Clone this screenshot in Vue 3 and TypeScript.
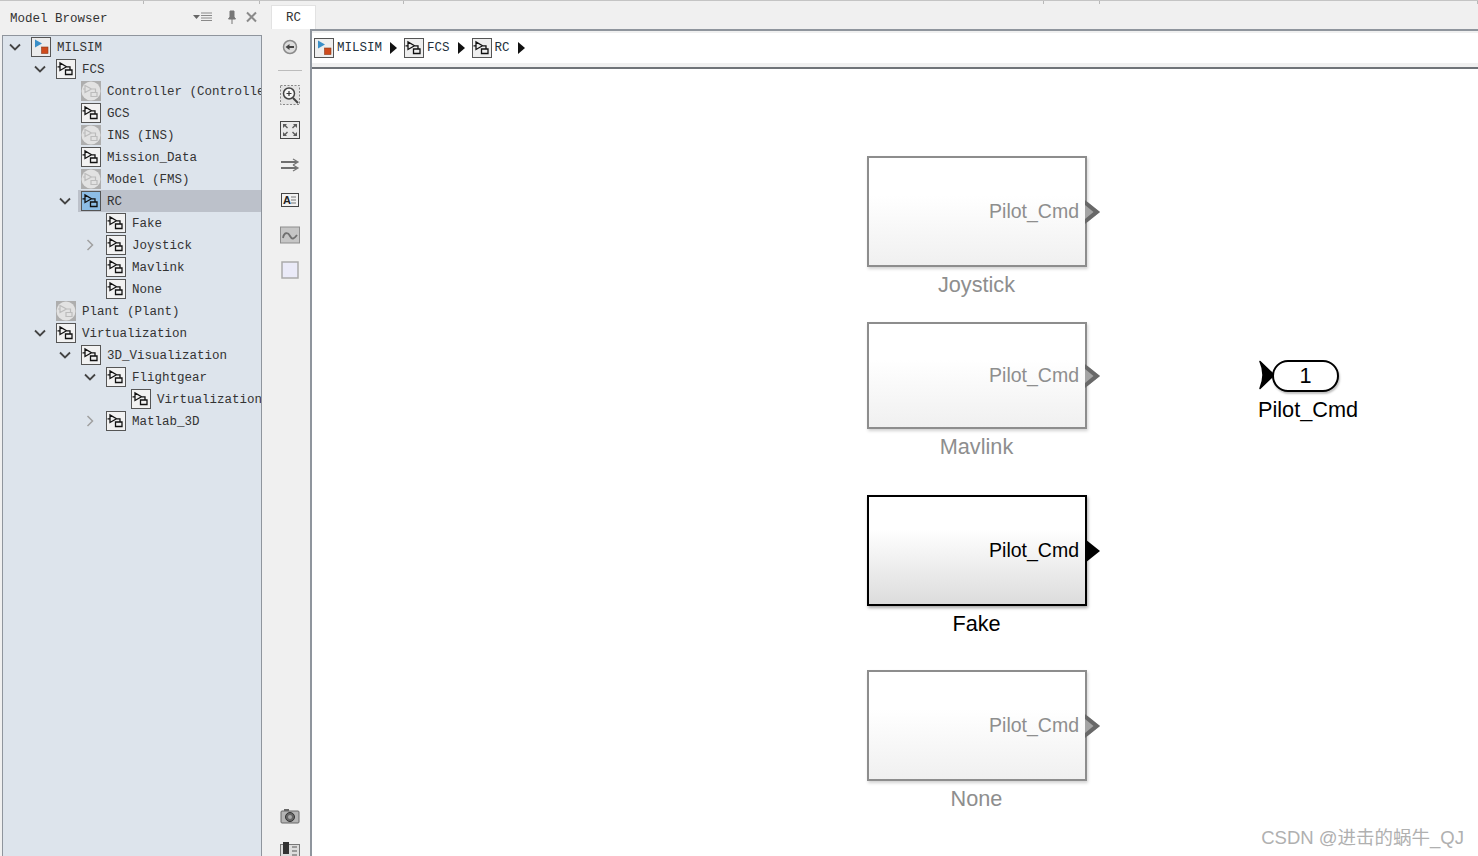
<script setup lang="ts">
type Kind = 'root' | 'sub' | 'ref'
interface Row { label: string; level: number; kind: Kind; chev?: 'down' | 'right'; selected?: boolean }
const rows: Row[] = [
  { label: 'MILSIM', level: 0, kind: 'root', chev: 'down' },
  { label: 'FCS', level: 1, kind: 'sub', chev: 'down' },
  { label: 'Controller (Controller)', level: 2, kind: 'ref' },
  { label: 'GCS', level: 2, kind: 'sub' },
  { label: 'INS (INS)', level: 2, kind: 'ref' },
  { label: 'Mission_Data', level: 2, kind: 'sub' },
  { label: 'Model (FMS)', level: 2, kind: 'ref' },
  { label: 'RC', level: 2, kind: 'sub', chev: 'down', selected: true },
  { label: 'Fake', level: 3, kind: 'sub' },
  { label: 'Joystick', level: 3, kind: 'sub', chev: 'right' },
  { label: 'Mavlink', level: 3, kind: 'sub' },
  { label: 'None', level: 3, kind: 'sub' },
  { label: 'Plant (Plant)', level: 1, kind: 'ref' },
  { label: 'Virtualization', level: 1, kind: 'sub', chev: 'down' },
  { label: '3D_Visualization', level: 2, kind: 'sub', chev: 'down' },
  { label: 'Flightgear', level: 3, kind: 'sub', chev: 'down' },
  { label: 'Virtualization', level: 4, kind: 'sub' },
  { label: 'Matlab_3D', level: 3, kind: 'sub', chev: 'right' },
]
const crumbs: { label: string; kind: Kind }[] = [
  { label: 'MILSIM', kind: 'root' },
  { label: 'FCS', kind: 'sub' },
  { label: 'RC', kind: 'sub' },
]
const blocks = [
  { name: 'Joystick', top: 87, height: 111, active: false },
  { name: 'Mavlink', top: 253, height: 107, active: false },
  { name: 'Fake', top: 426, height: 111, active: true },
  { name: 'None', top: 601, height: 111, active: false },
]
const topSegs = [144, 116, 144, 640, 56, 378]
</script>

<template>
  <div class="app">
    <div class="strip">
      <span v-for="(w, i) in topSegs" :key="i" class="seg" :style="{ width: w + 'px' }"></span>
    </div>
    <div class="main">
      <aside class="browser">
        <header class="browser-head">
          <span class="browser-title">Model Browser</span>
          <svg class="head-icons" width="68" height="14" viewBox="0 0 68 14">
            <path d="M1 5h7l-3.500 4z" fill="#666" />
            <path d="M9 3h11M9 5.500h11M9 8h11M9 10.500h11" stroke="#8a8a8a" stroke-width="1" />
            <path d="M38 1h4v6l1.500 2h-7l1.500-2zM40 9v5" fill="#777" stroke="#777" stroke-width="1" />
            <path d="M55 2.500l9 9M64 2.500l-9 9" stroke="#8a8a8a" stroke-width="2" />
          </svg>
        </header>
        <div class="tree">
          <div v-for="(r, i) in rows" :key="i" class="row" :class="'lv' + r.level">
            <span class="chev">
              <svg v-if="r.chev === 'down'" width="12" height="8" viewBox="0 0 12 8"><path d="M1 1.500l5 5 5-5" fill="none" stroke="#444" stroke-width="1.800" /></svg>
              <svg v-else-if="r.chev === 'right'" width="8" height="12" viewBox="0 0 8 12"><path d="M1.500 1l5 5-5 5" fill="none" stroke="#a0a0a0" stroke-width="1.500" /></svg>
            </span>
            <span class="cell" :class="{ selected: r.selected }">
              <svg class="ico" width="20" height="20" viewBox="0 0 20 20">
                <template v-if="r.kind === 'ref'">
                  <rect width="20" height="20" fill="#aeaeae" />
                  <circle cx="10" cy="10" r="9.500" fill="#e2e2e2" />
                  <path d="M4 4.500v7l6.500-3.500zM2 8h2M10.500 8h4v3M10 11.500h6v4h-6z" fill="none" stroke="#bcbcbc" stroke-width="1.200" />
                </template>
                <template v-else>
                  <rect x=".5" y=".5" width="19" height="19" :fill="r.selected ? '#8dbde6' : r.kind === 'root' ? '#ececec' : '#f2f2f2'" stroke="#555" />
                  <template v-if="r.kind === 'root'">
                    <path d="M4 2.500v8l7-4z" fill="#3a8fc8" />
                    <rect x="10.500" y="10" width="6.500" height="6.500" fill="#cf4a1c" stroke="#8b3a1a" stroke-width=".6" />
                  </template>
                  <path v-else d="M4 4v7.500l6.500-3.700zM1.500 7.800H4M10.500 7.800h3.500v3M9.500 11h6.500v4.500H9.500z" fill="none" stroke="#111" stroke-width="1.300" />
                </template>
              </svg>
              <span class="label">{{ r.label }}</span>
            </span>
          </div>
        </div>
      </aside>

      <section class="editor">
        <div class="tabbar"><div class="tab">RC</div></div>
        <div class="work">
          <nav class="tools">
            <svg class="t t-back" width="16" height="16" viewBox="0 0 16 16">
              <circle cx="8" cy="8" r="6.500" fill="#ddd" stroke="#8a8a8a" stroke-width="1.500" />
              <path d="M3.500 8l4-3v2h4.500v2H7.500v2z" fill="#444" />
            </svg>
            <span class="sep"></span>
            <svg class="t t-zoom" width="20" height="20" viewBox="0 0 20 20">
              <rect x=".5" y=".5" width="19" height="19" fill="#e4e4e4" stroke="#888" stroke-dasharray="2 1.500" />
              <circle cx="9" cy="8.500" r="5.500" fill="#f6f6f6" stroke="#444" stroke-width="1.500" />
              <path d="M6.500 8.500h5M9 6v5" stroke="#333" stroke-width="1.200" />
              <path d="M13 13l5 5" stroke="#444" stroke-width="2" />
            </svg>
            <svg class="t" width="20" height="20" viewBox="0 0 20 20">
              <rect x=".5" y="1.500" width="19" height="17" fill="#e8e8e8" stroke="#444" />
              <path d="M3 4h4L5.800 5.200 8 7.400 7 8.400 4.800 6.200 3 8zM17 4h-4l1.200 1.200L12 7.400l1 1 2.200-2.200L17 8zM3 16h4l-1.200-1.200L8 12.600l-1-1-2.200 2.200L3 12zM17 16h-4l1.200-1.200-2.200-2.200 1-1 2.200 2.200L17 12z" fill="#5a5a5a" />
            </svg>
            <svg class="t" width="20" height="20" viewBox="0 0 20 20">
              <path d="M1 7h16M1 13h16" stroke="#444" stroke-width="1.300" />
              <path d="M13 4l5 3-5 3M13 10l5 3-5 3" fill="none" stroke="#777" stroke-width="1.300" />
            </svg>
            <svg class="t" width="20" height="20" viewBox="0 0 20 20">
              <rect x="1.500" y="3.500" width="17" height="13" fill="#f2f2f2" stroke="#444" />
              <text x="3" y="14" class="aglyph">A</text>
              <path d="M11 7h5M11 10h5M11 13h5" stroke="#777" />
            </svg>
            <svg class="t" width="20" height="20" viewBox="0 0 20 20">
              <rect x=".5" y="2" width="19" height="16" fill="#c6c6c6" stroke="#8e8e8e" />
              <path d="M3 13c1-6 5-6 7-2s4 3 7-1" fill="none" stroke="#707070" stroke-width="1.800" />
            </svg>
            <svg class="t" width="20" height="20" viewBox="0 0 20 20">
              <rect x="2" y="2" width="16" height="16" fill="#eaeaf8" stroke="#aaa" stroke-width="1.500" />
            </svg>
            <span class="spacer"></span>
            <svg class="t t-cam" width="20" height="18" viewBox="0 0 20 18">
              <path d="M4 2h5v2H4z" fill="#666" />
              <rect x="1" y="4" width="18" height="12" rx="1" fill="#b4b4b4" stroke="#666" />
              <circle cx="10" cy="10" r="4.500" fill="#666" stroke="#333" />
              <circle cx="10" cy="10" r="2" fill="#aaa" />
            </svg>
            <svg class="t t-last" width="20" height="16" viewBox="0 0 20 16">
              <rect x=".5" y="2.500" width="19" height="13.500" fill="#ddd" stroke="#777" />
              <rect x="3" y="0" width="6" height="12" fill="#333" />
              <path d="M12 5h5M12 9h5M12 13h5" stroke="#999" stroke-width="2" />
            </svg>
          </nav>

          <div class="pane">
            <div class="crumbbar">
              <div class="crumbs">
                <template v-for="c in crumbs" :key="c.label">
                  <svg class="ico" width="20" height="20" viewBox="0 0 20 20">
                    <rect x=".5" y=".5" width="19" height="19" fill="#eee" stroke="#555" />
                    <template v-if="c.kind === 'root'">
                      <path d="M4 2.500v8l7-4z" fill="#3a8fc8" />
                      <rect x="10.500" y="10" width="6.500" height="6.500" fill="#cf4a1c" stroke="#8b3a1a" stroke-width=".6" />
                    </template>
                    <path v-else d="M4 4v7.500l6.500-3.700zM1.500 7.800H4M10.500 7.800h3.500v3M9.500 11h6.500v4.500H9.500z" fill="none" stroke="#111" stroke-width="1.300" />
                  </svg>
                  <span class="crumb-label">{{ c.label }}</span>
                  <svg class="crumb-arrow" width="7" height="12" viewBox="0 0 7 12"><path d="M0 0l7 6-7 6z" fill="#111" /></svg>
                </template>
              </div>
            </div>

            <div class="canvas">
              <div
                v-for="b in blocks"
                :key="b.name"
                class="block"
                :class="{ active: b.active }"
                :style="{ top: b.top + 'px', height: b.height + 'px' }"
              >
                <span class="port-text">Pilot_Cmd</span>
                <svg class="port" width="16" height="26" viewBox="0 0 16 26">
                  <template v-if="b.active"><path d="M0 1l15 12L0 25z" fill="#000" /></template>
                  <template v-else>
                    <path d="M0 1l15 12L0 25z" fill="#a4a4a4" />
                    <path d="M0 1l15 12L0 25l0-5 8.500-7L0 6z" fill="#5e5e5e" opacity=".85" />
                  </template>
                </svg>
                <span class="block-name">{{ b.name }}</span>
              </div>

              <div class="outport">
                <svg class="out-arrow" width="16" height="30" viewBox="0 0 16 30">
                  <path d="M1 1.500l14 13.500L1 28.500c2-5 3-9 3-13.500S3 6 1 1.500z" fill="#000" stroke="#000" stroke-linejoin="round" stroke-width="1.500" />
                </svg>
                <div class="oval">1</div>
                <div class="out-name">Pilot_Cmd</div>
              </div>

              <div class="mark">CSDN @进击的蜗牛_QJ</div>
            </div>
          </div>
        </div>
      </section>
    </div>
  </div>
</template>

<style scoped>
.app {
  width: 1478px;
  height: 856px;
  overflow: hidden;
  background: #f0f0f0;
  display: flex;
  flex-direction: column;
  font-family: "Liberation Mono", monospace;
  font-size: 12.5px;
  color: #333;
}
.strip {
  height: 3px;
  flex: none;
  display: flex;
  border-top: 1px solid #c4c4c4;
  box-sizing: border-box;
}
.seg {
  box-sizing: border-box;
  border-right: 1px solid #b8b8b8;
  height: 3px;
}
.main {
  flex: 1;
  display: flex;
  min-height: 0;
}
.browser {
  width: 262px;
  flex: none;
  display: flex;
  flex-direction: column;
}
.browser-head {
  height: 32px;
  flex: none;
  box-sizing: border-box;
  display: flex;
  align-items: center;
  justify-content: space-between;
  padding: 0 2px 1px 10px;
}
.head-icons {
  margin-top: -3px;
}
.tree {
  flex: 1;
  margin-left: 2px;
  background: #dde4ec;
  border: 1px solid #8f959d;
  border-bottom: 0;
  overflow: hidden;
  box-sizing: border-box;
}
.row {
  height: 22px;
  display: flex;
  align-items: center;
  white-space: nowrap;
}
.lv1 { padding-left: 25px; }
.lv2 { padding-left: 50px; }
.lv3 { padding-left: 75px; }
.lv4 { padding-left: 100px; }
.chev {
  width: 25px;
  flex: none;
  box-sizing: border-box;
  padding-right: 2px;
  display: flex;
  align-items: center;
  justify-content: center;
}
.cell {
  flex: 1;
  height: 22px;
  display: flex;
  align-items: center;
  padding-left: 3px;
  min-width: 0;
  overflow: hidden;
}
.cell.selected {
  background: #bcc1ca;
}
.ico {
  flex: none;
  display: block;
}
.label {
  margin-left: 6px;
  padding-top: 2px;
}
.editor {
  flex: 1;
  min-width: 0;
  display: flex;
  flex-direction: column;
}
.tabbar {
  height: 26px;
  flex: none;
  display: flex;
  align-items: flex-end;
  padding-left: 9px;
}
.tab {
  width: 45px;
  height: 24px;
  box-sizing: border-box;
  background: #fff;
  border: 1px solid #e2e2e2;
  border-bottom: 0;
  text-align: center;
  line-height: 24px;
}
.work {
  flex: 1;
  min-height: 0;
  display: flex;
}
.tools {
  width: 48px;
  flex: none;
  box-sizing: border-box;
  padding-left: 8px;
  display: flex;
  flex-direction: column;
  align-items: center;
}
.t {
  flex: none;
  margin-bottom: 15px;
}
.t-back {
  margin-top: 10px;
  margin-bottom: 15px;
}
.t-zoom {
  margin-top: 14px;
}
.sep {
  width: 24px;
  height: 1px;
  flex: none;
  background: #bcbcbc;
}
.spacer {
  flex: 1;
}
.t-cam {
  margin-bottom: 17px;
}
.t-last {
  margin-bottom: -2px;
}
.pane {
  flex: 1;
  min-width: 0;
  display: flex;
  flex-direction: column;
  border-left: 2px solid #8f959d;
  border-top: 2px solid #8f959d;
  background: #fff;
}
.crumbbar {
  height: 38px;
  flex: none;
  box-sizing: border-box;
  padding: 2px 0 4px;
  background: #f0f0f0;
  border-bottom: 2px solid #6f7378;
}
.crumbs {
  height: 30px;
  background: #fff;
  display: flex;
  align-items: center;
  padding-left: 2px;
}
.crumb-label {
  margin-left: 3px;
  margin-right: 8px;
  color: #22303c;
}
.crumb-arrow {
  margin-right: 7px;
  flex: none;
}
.canvas {
  position: relative;
  flex: 1;
  min-height: 0;
  overflow: hidden;
  font-family: "Liberation Sans", Arial, sans-serif;
}
.block {
  position: absolute;
  left: 555px;
  width: 220px;
  box-sizing: border-box;
  border: 2px solid #8d8d8d;
  background: linear-gradient(#fff 0%, #fff 35%, #f0f0f0 100%);
  box-shadow: 1px 2px 3px rgba(0, 0, 0, 0.18);
}
.block.active {
  border-color: #000;
  background: linear-gradient(#fff 0%, #fff 30%, #dcdcdc 100%);
  box-shadow: 1px 2px 3px rgba(0, 0, 0, 0.35);
}
.port-text {
  position: absolute;
  right: 6px;
  top: 50%;
  transform: translateY(calc(-50% - 1px));
  font-size: 19.5px;
  color: #8e8e8e;
  white-space: nowrap;
}
.active .port-text {
  color: #000;
}
.port {
  position: absolute;
  left: 216px;
  top: 50%;
  transform: translateY(-50%);
}
.block-name {
  position: absolute;
  left: 0;
  right: 1px;
  top: 100%;
  margin-top: 7px;
  text-align: center;
  font-size: 21.7px;
  color: #8e8e8e;
}
.active .block-name {
  color: #000;
}
.outport {
  position: absolute;
  left: 946px;
  top: 290px;
  width: 100px;
  height: 66px;
}
.out-arrow {
  position: absolute;
  left: 1px;
  top: 1px;
}
.oval {
  position: absolute;
  left: 14px;
  top: 1px;
  width: 67px;
  height: 32px;
  box-sizing: border-box;
  border: 2px solid #000;
  border-radius: 16px;
  background: #fff;
  box-shadow: 1px 2px 2px rgba(0, 0, 0, 0.25);
  text-align: center;
  line-height: 28px;
  font-size: 21.7px;
  color: #000;
}
.out-name {
  position: absolute;
  left: 0;
  top: 38px;
  font-size: 21.7px;
  color: #000;
  white-space: nowrap;
}
.mark {
  position: absolute;
  right: 14px;
  bottom: 7px;
  font-family: "Liberation Sans", "Noto Sans CJK SC", sans-serif;
  font-size: 18.5px;
  color: #b0b0b0;
  white-space: nowrap;
}
.aglyph {
  font-family: "Liberation Sans", Arial, sans-serif;
  font-size: 11px;
  font-weight: 700;
  fill: #222;
}
</style>
